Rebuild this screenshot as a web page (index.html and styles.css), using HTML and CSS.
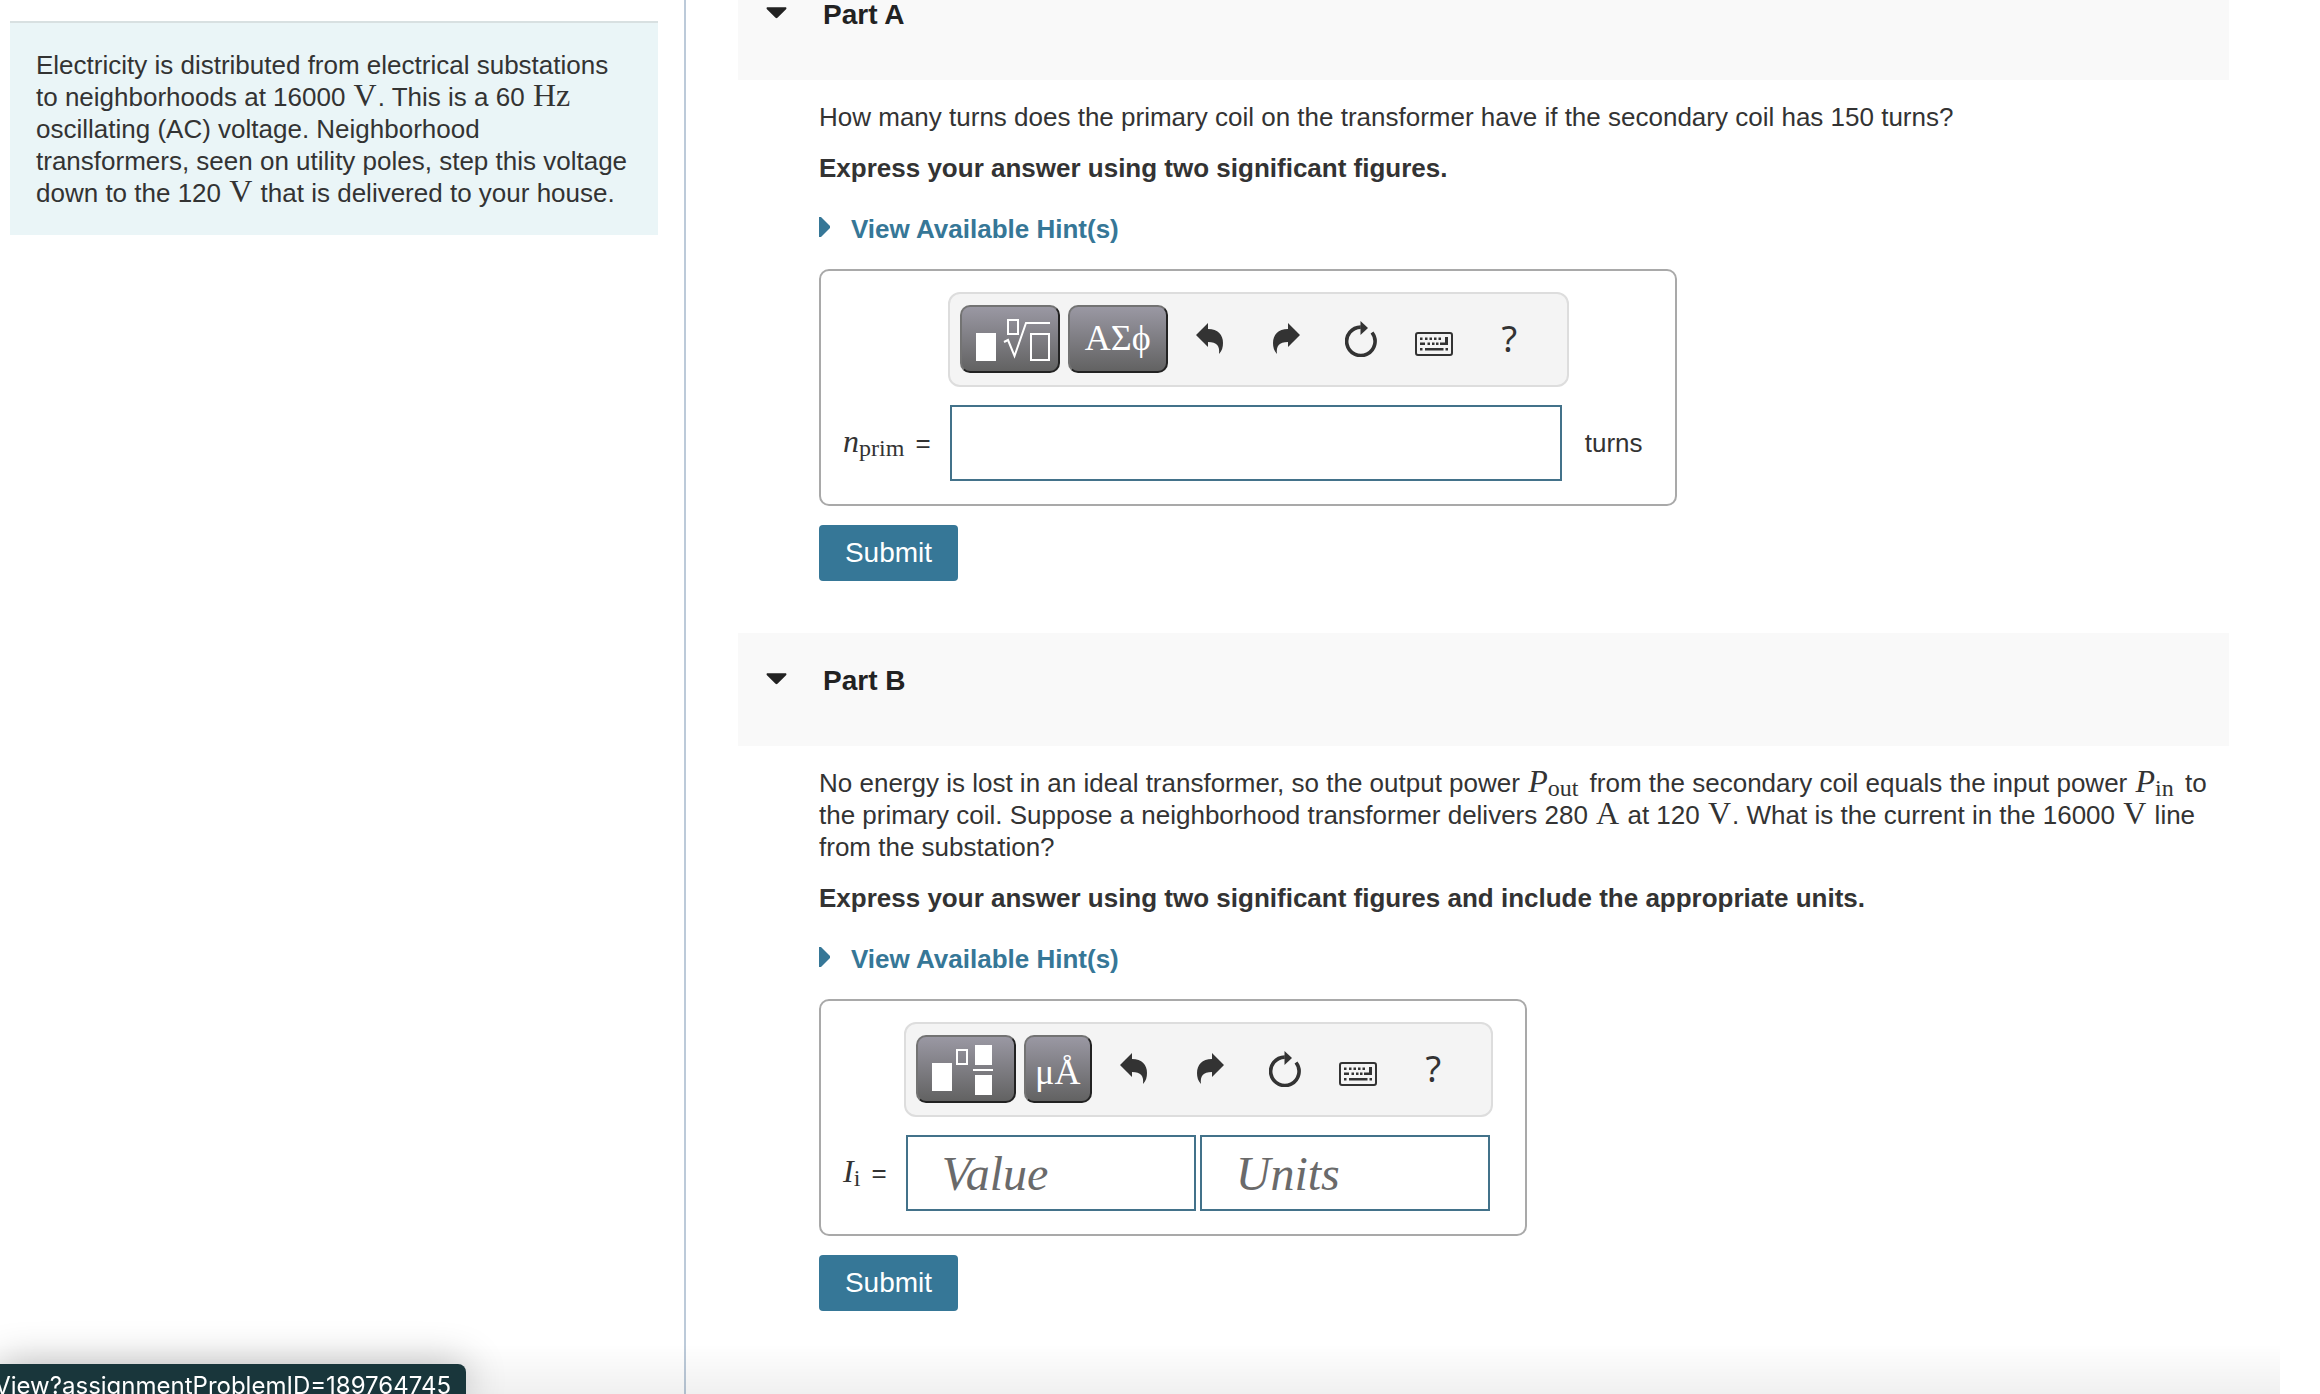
FILE: index.html
```html
<!DOCTYPE html>
<html lang="en">
<head>
<meta charset="utf-8">
<title>Transformer problem</title>
<link rel="stylesheet" href="styles.css">
</head>
<body>
<svg class="sprite" aria-hidden="true">
  <symbol id="undo" viewBox="0 0 28 31"><path d="M0 12 12 0v6c10 0 15 6 15 14 0 4-1 8-4 11 1-8-2-12-11-12v5z"/></symbol>
  <symbol id="redo" viewBox="0 0 28 31"><path d="M27 12 15 0v6C5 6 0 12 0 20c0 4 1 8 4 11-1-8 2-12 11-12v5z"/></symbol>
  <symbol id="reset" viewBox="0 0 32 36"><path d="M15.8 6.1a14.2 14.2 0 1 0 11.2 5.400" fill="none" stroke="currentColor" stroke-width="3.6"/><path d="M15.500 0 23 7l-7.500 7z"/></symbol>
  <symbol id="keyboard" viewBox="0 0 38 24"><rect x="1" y="1" width="36" height="22" rx="2" fill="none" stroke="currentColor" stroke-width="2"/><path d="M5 5.500h2.500V8H5zm5 0h2.500V8H10zm4.500 0H17V8h-2.500zm4.500 0h2.500V8H19zm4.500 0H26V8h-2.500zM30 5h3v8h-8v-2.500h5zM5 10.500h5V13H5zm7.500 0H15V13h-2.500zm4.500 0h2.500V13H17zm4 0h2.500V13H21zM5 16h2.500v2.500H5zm5 0h18.500v2.500H10zm20.500 0H33v2.500h-2.500z"/></symbol>
</svg>

<div class="page">
  <aside class="side">
    <p class="intro">Electricity is distributed from electrical substations to neighborhoods at 16000 <span class="math">V</span>. This is a 60 <span class="math">Hz</span> oscillating (AC) voltage. Neighborhood transformers, seen on utility poles, step this voltage down to the 120 <span class="math">V</span> that is delivered to your house.</p>
  </aside>

  <main class="main">
    <section class="part">
      <header class="part-head">
        <svg class="caret" viewBox="0 0 22 12"><path d="M1 0h20q1 1 0 2l-9 9q-1 1-2 0L1 2q-1-1 0-2z"/></svg>
        <h2>Part A</h2>
      </header>
      <div class="part-body">
        <p class="question">How many turns does the primary coil on the transformer have if the secondary coil has 150 turns?</p>
        <p class="instruction">Express your answer using two significant figures.</p>
        <a class="hint" href="#"><svg class="hint-mark" viewBox="0 0 12 20"><path d="M0 0h2l9 9v2l-9 9H0z"/></svg>View Available Hint(s)</a>
        <form class="answer" id="form-a">
          <div class="toolbar">
            <button type="button" class="key" aria-label="Templates"><svg class="key-art" viewBox="0 0 100 68"><path class="solid" d="M16 26h20v28H16z"/><path class="line" d="M48 13h10v14H48zM44 35l4-2 6.500 16L66 16h24M71 27h18v26H71z"/></svg></button>
            <button type="button" class="key">ΑΣϕ</button>
            <button type="button" class="tool swing" aria-label="Undo"><svg class="arrow"><use href="#undo"/></svg></button>
            <button type="button" class="tool swing" aria-label="Redo"><svg class="arrow"><use href="#redo"/></svg></button>
            <button type="button" class="tool turn" aria-label="Reset"><svg class="cycle"><use href="#reset"/></svg></button>
            <button type="button" class="tool" aria-label="Keyboard shortcuts"><svg class="board"><use href="#keyboard"/></svg></button>
            <button type="button" class="tool">?</button>
          </div>
          <label class="name" for="turns"><span class="math"><i>n</i><span class="sub">prim</span></span> =</label>
          <input class="field wide" id="turns" type="text">
          <span class="unit">turns</span>
        </form>
        <button type="submit" form="form-a" class="submit">Submit</button>
      </div>
    </section>

    <section class="part">
      <header class="part-head">
        <svg class="caret" viewBox="0 0 22 12"><path d="M1 0h20q1 1 0 2l-9 9q-1 1-2 0L1 2q-1-1 0-2z"/></svg>
        <h2>Part B</h2>
      </header>
      <div class="part-body">
        <p class="question">No energy is lost in an ideal transformer, so the output power <span class="math"><i>P</i><span class="sub">out</span></span> from the secondary coil equals the input power <span class="math"><i>P</i><span class="sub">in</span></span> to the primary coil. Suppose a neighborhood transformer delivers 280 <span class="math">A</span> at 120 <span class="math">V</span>. What is the current in the 16000 <span class="math">V</span> line from the substation?</p>
        <p class="instruction">Express your answer using two significant figures and include the appropriate units.</p>
        <a class="hint" href="#"><svg class="hint-mark" viewBox="0 0 12 20"><path d="M0 0h2l9 9v2l-9 9H0z"/></svg>View Available Hint(s)</a>
        <form class="answer" id="form-b">
          <div class="toolbar">
            <button type="button" class="key" aria-label="Templates"><svg class="key-art" viewBox="0 0 100 68"><path class="solid" d="M16 26h20v28H16zM59 8h17v20H59zM57 32h20v2H57zM59 38h17v20H59z"/><path class="line" d="M41 13h10v14H41z"/></svg></button>
            <button type="button" class="key narrow">μÅ</button>
            <button type="button" class="tool swing" aria-label="Undo"><svg class="arrow"><use href="#undo"/></svg></button>
            <button type="button" class="tool swing" aria-label="Redo"><svg class="arrow"><use href="#redo"/></svg></button>
            <button type="button" class="tool turn" aria-label="Reset"><svg class="cycle"><use href="#reset"/></svg></button>
            <button type="button" class="tool" aria-label="Keyboard shortcuts"><svg class="board"><use href="#keyboard"/></svg></button>
            <button type="button" class="tool">?</button>
          </div>
          <label class="name" for="value"><span class="math"><i>I</i><span class="sub">i</span></span> =</label>
          <div class="pair">
            <input class="field" id="value" type="text" placeholder="Value">
            <input class="field" type="text" placeholder="Units" aria-label="Units">
          </div>
        </form>
        <button type="submit" form="form-b" class="submit">Submit</button>
      </div>
    </section>
  </main>
</div>

<div class="edge-shade"></div>
<div class="status">View?assignmentProblemID=189764745</div>
</body>
</html>
```
FILE: styles.css
```css
* { box-sizing: border-box; }

body {
  margin: 0;
  background: #fff;
  color: #333;
  font: 26px/32px "Liberation Sans", Arial, sans-serif;
}

h2, p { margin: 0; }

.sprite { display: none; }

.page {
  display: flex;
  height: 100vh;
  overflow: hidden;
}

.side {
  flex: 0 0 686px;
  padding: 21px 26px 0 10px;
  border-right: 2px solid #bccad9;
}

.intro {
  padding: 26px 26px 26px;
  border-top: 2px solid #d8e0e1;
  background: #eaf5f7;
}

.math {
  margin: 0 1px;
  font-family: "Liberation Serif", "Times New Roman", serif;
  font-size: 32px;
  line-height: 0;
}

.sub {
  margin-right: 3px;
  font-size: 24px;
  vertical-align: -4px;
}

/* The page is scrolled part of the way into the first part's heading. */
.main {
  flex: 1;
  margin: -33px 91px 0 52px;
}

.part { margin-bottom: 52px; }

.part-head {
  display: flex;
  gap: 36px;
  height: 113px;
  padding: 32px 28px 0;
  background: #f9f9f9;
  color: #222;
}

.part-head h2 {
  font-size: 28px;
  line-height: 32px;
}

.caret {
  width: 21px;
  height: 12px;
  margin-top: 8px;
  fill: #222;
}

.part-body { padding: 21px 0 0 81px; }

.instruction {
  margin-top: 19px;
  font-weight: bold;
}

.hint {
  display: flex;
  align-items: center;
  gap: 20px;
  margin-top: 29px;
  color: #367797;
  font-weight: bold;
  text-decoration: none;
}

.hint-mark {
  width: 12px;
  height: 20px;
  margin-bottom: 4px;
  fill: #367797;
}

.answer {
  display: grid;
  grid-template-columns: auto auto auto;
  row-gap: 18px;
  align-items: center;
  width: fit-content;
  margin-top: 24px;
  padding: 21px 32px 23px 21px;
  border: 2px solid #a9a9a9;
  border-radius: 10px;
}

.toolbar {
  display: flex;
  grid-column: 2 / 4;
  align-items: center;
  justify-self: start;
  height: 95px;
  padding: 0 20px 2px 10px;
  border: 2px solid #ddd;
  border-radius: 12px;
  background: #f4f4f4;
}

.key {
  width: 100px;
  height: 68px;
  margin-right: 8px;
  padding: 0 0 2px;
  border: 2px solid;
  border-color: #737373 #222 #222 #737373;
  border-radius: 10px;
  background: linear-gradient(#9a98a3, #626262);
  color: #fff;
  font: 36px/40px "Liberation Serif", "Times New Roman", serif;
}

.key.narrow {
  width: 68px;
  padding: 6px 0 0;
}

.key + .key { margin-right: 4px; }

.key-art {
  display: block;
  width: 100px;
  height: 68px;
  margin: 0 -2px -2px;
}

.solid { fill: #fff; }

.line {
  fill: none;
  stroke: #fff;
  stroke-width: 2;
}

.tool {
  display: flex;
  align-items: center;
  justify-content: center;
  width: 75px;
  height: 68px;
  padding: 0;
  border: 0;
  background: none;
  color: #333;
  font: 36px/40px "Noto Sans", sans-serif;
}

.tool.swing { width: 77px; }

.tool.turn { width: 71px; }

.tool svg { fill: currentColor; }

.arrow { width: 28px; height: 31px; }

.cycle { width: 32px; height: 36px; }

.board {
  width: 38px;
  height: 24px;
  margin-top: 10px;
}

.name { padding-right: 17px; }

.field {
  width: 290px;
  height: 76px;
  padding: 0 34px;
  border: 2px solid #43728a;
  background: #fff;
  color: #333;
  font: 48px/60px "Liberation Serif", "Times New Roman", serif;
}

.field.wide {
  width: 612px;
  margin-left: 2px;
}

.field::placeholder {
  color: #6a6a6a;
  font-style: italic;
}

.pair {
  display: flex;
  grid-column: 2 / 4;
  gap: 4px;
  margin-left: 2px;
}

.unit { padding-left: 23px; }

.submit {
  display: block;
  width: 139px;
  height: 56px;
  margin-top: 19px;
  padding: 0;
  border: 0;
  border-radius: 4px;
  background: #367797;
  color: #fff;
  font: 28px/32px "Liberation Sans", Arial, sans-serif;
}

/* Shadow thrown on the window's lower edge. */
.edge-shade {
  position: fixed;
  right: 40px;
  bottom: 0;
  left: 0;
  height: 50px;
  background: linear-gradient(transparent, rgba(0, 0, 0, 0.06));
  pointer-events: none;
}

/* The browser's link preview, partly beyond the window's corner. */
.status {
  position: fixed;
  bottom: 0;
  left: 0;
  display: flex;
  justify-content: flex-end;
  width: 466px;
  height: 30px;
  padding: 6px 15px 0 0;
  border-radius: 0 8px 0 0;
  background: #19363b;
  box-shadow: 0 0 40px rgba(0, 0, 0, 0.3);
  color: #fff;
  font: 24px/32px Inter, sans-serif;
  white-space: nowrap;
}
```
